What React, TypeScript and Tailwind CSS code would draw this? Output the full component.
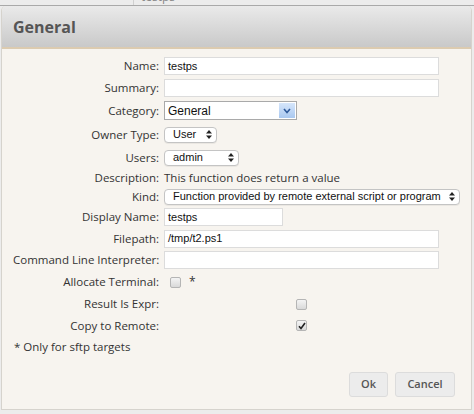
import React from 'react';

const labelFont = { fontFamily: '"Open Sans", "Liberation Sans", sans-serif' };
const fieldFont = { fontFamily: '"Liberation Sans", Arial, sans-serif' };

function Row({ label, h, children }: { label: string; h: string; children?: React.ReactNode }) {
  return (
    <div className={`flex items-center ${h}`}>
      <div className="w-[146px] shrink-0 text-right text-[11.5px] text-[#333] whitespace-nowrap" style={labelFont}>
        {label}
      </div>
      <div className="ml-[5px] flex items-center">{children}</div>
    </div>
  );
}

function TextInput({ value, width }: { value?: string; width: string }) {
  return (
    <div
      className={`${width} h-[18px] bg-white border border-[#dcdcdc] px-[3px] flex items-center text-[11px] text-[#111]`}
      style={fieldFont}
    >
      {value}
    </div>
  );
}

function UpDown() {
  return (
    <svg width="6" height="9" viewBox="0 0 6 9" className="shrink-0">
      <path d="M3 0 L6 3.5 H0 Z" fill="#222" />
      <path d="M3 9 L6 5.5 H0 Z" fill="#222" />
    </svg>
  );
}

function MacSelect({ value, width }: { value: string; width: string }) {
  return (
    <div
      className={`${width} h-[16px] bg-white border border-[#c4c4c4] rounded-[4px] flex items-center justify-between pl-[8px] pr-[4px] text-[11px] text-[#111] whitespace-nowrap shadow-[0_1px_0_rgba(0,0,0,0.05)]`}
      style={fieldFont}
    >
      <span>{value}</span>
      <UpDown />
    </div>
  );
}

function Checkbox({ checked }: { checked?: boolean }) {
  return (
    <div className="w-[11px] h-[11px] rounded-[2px] border border-[#b5b5b5] bg-gradient-to-b from-[#f4f4f4] to-[#d9d9d9] flex items-center justify-center">
      {checked && (
        <svg width="8" height="8" viewBox="0 0 8 8">
          <path d="M1 4.2 L3 6.5 L7 1" fill="none" stroke="#222" strokeWidth="1.6" />
        </svg>
      )}
    </div>
  );
}

export default function App() {
  return (
    <div className="w-[474px] h-[414px] bg-[#ececec] overflow-hidden" style={labelFont}>
      <div className="relative h-[6px] overflow-hidden bg-[#ececec] border-b border-[#a9a9a9]">
        <div className="absolute left-[133px] top-0 h-full w-px bg-[#d0d0d0]" />
        <div className="absolute left-[141px] top-[-11px] text-[12px] leading-[16px] text-[#888]">testps</div>
      </div>
      <div className="ml-[1px] w-[471px] h-[404px] bg-[#f7f4ef] border-x border-b border-[#d6d3cd] rounded-t-[5px] overflow-hidden">
        <div className="h-[43px] bg-gradient-to-b from-[#eaeaea] to-[#c9c9c9] flex items-center px-[11px] border-b-2 border-[#dccbb0]">
          <span className="text-[16px] font-bold text-[#555]">General</span>
        </div>
        <div className="pt-[6px] pl-[11px]">
          <Row label="Name:" h="h-[22px]">
            <TextInput value="testps" width="w-[275px]" />
          </Row>
          <Row label="Summary:" h="h-[22px]">
            <TextInput width="w-[275px]" />
          </Row>
          <Row label="Category:" h="h-[23px]">
            <div className="w-[133px] h-[19px] bg-white border border-[#a9a9a9] flex items-stretch" style={fieldFont}>
              <div className="flex-1 flex items-center pl-[3px] text-[12px] text-[#111]">General</div>
              <div className="w-[16px] my-[1px] mr-[1px] bg-gradient-to-b from-[#d6e6fb] to-[#a9c8f0] flex items-center justify-center">
                <svg width="8" height="6" viewBox="0 0 8 6">
                  <path d="M1 1 L4 4.5 L7 1" fill="none" stroke="#2f5a9a" strokeWidth="1.6" />
                </svg>
              </div>
            </div>
          </Row>
          <Row label="Owner Type:" h="h-[25px]">
            <MacSelect value="User" width="w-[53px]" />
          </Row>
          <Row label="Users:" h="h-[21px]">
            <MacSelect value="admin" width="w-[75px]" />
          </Row>
          <Row label="Description:" h="h-[19px]">
            <span className="text-[11.5px] text-[#333] whitespace-nowrap">This function does return a value</span>
          </Row>
          <Row label="Kind:" h="h-[19px]">
            <MacSelect value="Function provided by remote external script or program" width="w-[296px]" />
          </Row>
          <Row label="Display Name:" h="h-[22px]">
            <TextInput value="testps" width="w-[119px]" />
          </Row>
          <Row label="Filepath:" h="h-[21px]">
            <TextInput value="/tmp/t2.ps1" width="w-[275px]" />
          </Row>
          <Row label="Command Line Interpreter:" h="h-[22px]">
            <TextInput width="w-[275px]" />
          </Row>
          <Row label="Allocate Terminal:" h="h-[22px]">
            <div className="flex items-center pl-[6px] gap-[8px]">
              <Checkbox />
              <span className="text-[12px] text-[#333]">*</span>
            </div>
          </Row>
          <Row label="Result Is Expr:" h="h-[22px]">
            <div className="w-[275px] flex justify-center">
              <Checkbox />
            </div>
          </Row>
          <Row label="Copy to Remote:" h="h-[21px]">
            <div className="w-[275px] flex justify-center">
              <Checkbox checked />
            </div>
          </Row>
          <div className="h-[22px] flex items-center text-[11.5px] text-[#333] pl-[1px]">* Only for sftp targets</div>
        </div>
        <div className="mt-[14px] flex justify-end gap-[7px] pr-[16px]">
          <button className="w-[39px] h-[25px] rounded-[3px] border border-[#dcdcdc] bg-[#ececec] text-[11px] font-semibold text-[#555]">
            Ok
          </button>
          <button className="w-[60px] h-[25px] rounded-[3px] border border-[#dcdcdc] bg-[#ececec] text-[11px] font-semibold text-[#555]">
            Cancel
          </button>
        </div>
      </div>
    </div>
  );
}
